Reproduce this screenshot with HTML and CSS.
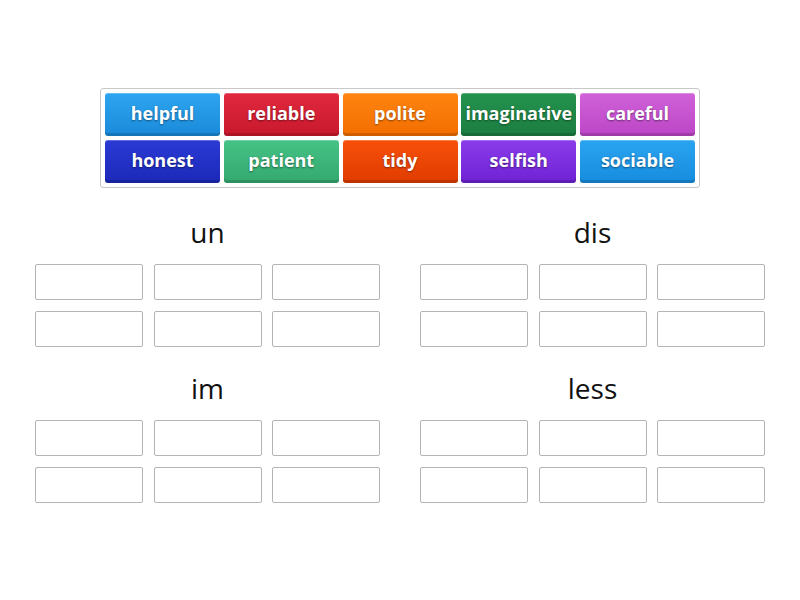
FILE: index.html
```html
<!DOCTYPE html>
<html lang="en">

<head>
    <meta charset="UTF-8">
    <meta name="viewport" content="width=device-width, initial-scale=1.0">
    <title>Prefixes - Group sort</title>
    <link rel="stylesheet" href="styles.css">
</head>

<body>
    <!-- Word tiles -->
    <div class="tray">
        <div class="tile blue">helpful</div>
        <div class="tile red">reliable</div>
        <div class="tile orange">polite</div>
        <div class="tile green">imaginative</div>
        <div class="tile orchid">careful</div>
        <div class="tile navy">honest</div>
        <div class="tile mint">patient</div>
        <div class="tile flame">tidy</div>
        <div class="tile violet">selfish</div>
        <div class="tile sky">sociable</div>
    </div>

    <!-- Groups -->
    <div class="groups">
        <div class="group">
            <div class="group-title">un</div>
            <div class="slots">
                <div class="slot"></div><div class="slot"></div><div class="slot"></div>
                <div class="slot"></div><div class="slot"></div><div class="slot"></div>
            </div>
        </div>
        <div class="group">
            <div class="group-title">dis</div>
            <div class="slots">
                <div class="slot"></div><div class="slot"></div><div class="slot"></div>
                <div class="slot"></div><div class="slot"></div><div class="slot"></div>
            </div>
        </div>
        <div class="group">
            <div class="group-title">im</div>
            <div class="slots">
                <div class="slot"></div><div class="slot"></div><div class="slot"></div>
                <div class="slot"></div><div class="slot"></div><div class="slot"></div>
            </div>
        </div>
        <div class="group">
            <div class="group-title">less</div>
            <div class="slots">
                <div class="slot"></div><div class="slot"></div><div class="slot"></div>
                <div class="slot"></div><div class="slot"></div><div class="slot"></div>
            </div>
        </div>
    </div>
</body>

</html>
```

FILE: styles.css
```css
body {
    margin: 0;
    font-family: "Open Sans", "Liberation Sans", sans-serif;
    background-color: #fff;
    color: #111;
}

.tray {
    width: 590px;
    margin: 88px auto 0;
    padding: 4px;
    border: 1px solid #c8c8c8;
    border-radius: 3px;
    display: grid;
    grid-template-columns: repeat(5, 115px);
    gap: 4px 3.75px;
}

.tile {
    height: 43px;
    box-sizing: border-box;
    padding-bottom: 3px;
    border-radius: 3px;
    color: #fff;
    font-weight: bold;
    font-size: 18px;
    display: flex;
    align-items: center;
    justify-content: center;
    white-space: nowrap;
    text-shadow: 0 1px 2px rgba(0, 0, 0, 0.45);
    box-shadow: inset 0 -3px 0 rgba(0, 0, 0, 0.15), inset 0 1px 0 rgba(255, 255, 255, 0.25);
}

.blue { background: linear-gradient(#2ea5f0, #1a8ad9); }
.red { background: linear-gradient(#e0283e, #c8182c); }
.orange { background: linear-gradient(#ff8410, #f26e00); }
.green { background: linear-gradient(#24934e, #1b7d40); }
.orchid { background: linear-gradient(#d062d8, #bc45c6); }
.navy { background: linear-gradient(#2a3ad4, #1c29b8); }
.mint { background: linear-gradient(#45c285, #34a96f); }
.flame { background: linear-gradient(#f8500a, #e03c00); }
.violet { background: linear-gradient(#8a3cea, #6f22d4); }
.sky { background: linear-gradient(#2aa4f0, #168cde); }

.groups {
    display: grid;
    grid-template-columns: 345px 345px;
    column-gap: 40px;
    row-gap: 21px;
    padding: 24px 35px 0;
}

.group-title {
    text-align: center;
    font-size: 28px;
    line-height: 40px;
    margin-bottom: 12px;
}

.slots {
    display: grid;
    grid-template-columns: repeat(3, 1fr);
    gap: 11px 10.5px;
}

.slot {
    height: 36px;
    box-sizing: border-box;
    border: 1px solid #b4b4b4;
    border-radius: 2px;
}
```
